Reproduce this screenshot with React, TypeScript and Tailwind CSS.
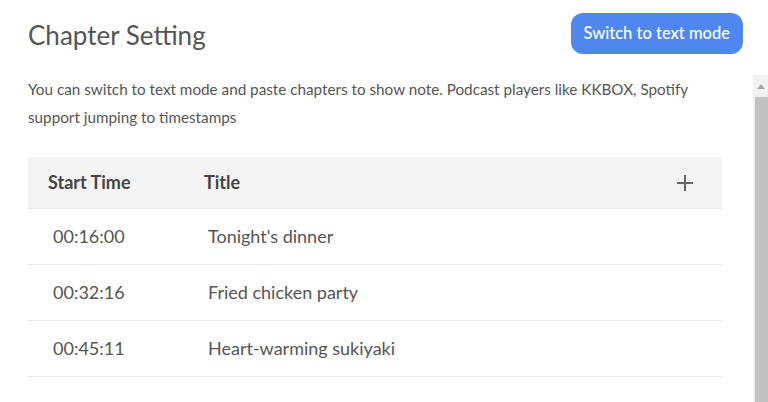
import React from 'react';

const chapters = [
  { time: '00:16:00', title: "Tonight's dinner" },
  { time: '00:32:16', title: 'Fried chicken party' },
  { time: '00:45:11', title: 'Heart-warming sukiyaki' },
];

export default function App() {
  return (
    <div className="w-[768px] h-[402px] overflow-hidden bg-white flex flex-col font-['Lato',sans-serif]">
      <div className="h-[75px] flex items-start justify-between pl-[28px] pr-[25px] pt-[13px] shrink-0">
        <h1 className="text-[26px] leading-[44px] text-[#555555] font-normal">Chapter Setting</h1>
        <button className="h-[41px] px-[13px] rounded-[12px] bg-[#4f87ee] text-white text-[16.5px] font-medium">
          Switch to text mode
        </button>
      </div>

      <div className="flex flex-1 min-h-0">
        <div className="flex-1 pl-[28px] pr-[31px]">
          <p className="text-[15.25px] leading-[28px] text-[#555555]">
            You can switch to text mode and paste chapters to show note. Podcast players like KKBOX, Spotify support jumping to timestamps
          </p>

          <div className="mt-[26px]">
            <div className="h-[52px] flex items-center bg-[#f4f4f4] border-b border-[#e6e6e6] text-[18px] font-bold text-[#444444]">
              <div className="w-[176px] pl-[20px]">Start Time</div>
              <div className="flex-1">Title</div>
              <div className="pr-[29px] flex items-center">
                <svg width="16" height="16" viewBox="0 0 16 16" fill="none" stroke="#666666" strokeWidth="2">
                  <path d="M8 0v16M0 8h16" />
                </svg>
              </div>
            </div>
            {chapters.map((c) => (
              <div key={c.time} className="h-[56px] flex items-center border-b border-[#e6e6e6] text-[18px] text-[#555555]">
                <div className="w-[180px] pl-[25px]">{c.time}</div>
                <div className="flex-1">{c.title}</div>
              </div>
            ))}
          </div>
        </div>

        <div className="w-[15px] bg-[#f1f1f1] flex flex-col shrink-0">
          <div className="h-[22px] flex items-center justify-center">
            <svg width="8" height="5" viewBox="0 0 8 5">
              <path d="M4 0L8 5H0z" fill="#a3a3a3" />
            </svg>
          </div>
          <div className="flex-1 ml-[2px] bg-[#c1c1c1]" />
        </div>
      </div>
    </div>
  );
}
